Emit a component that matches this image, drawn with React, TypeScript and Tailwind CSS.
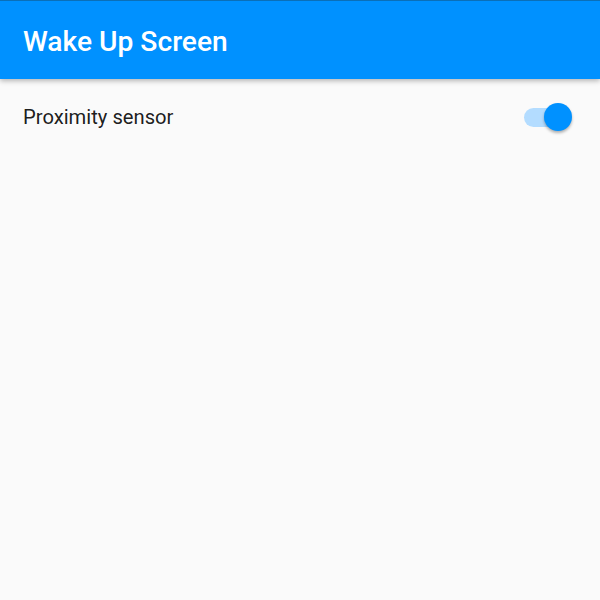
export default function App() {
    return (
        <div className="w-[600px] h-[600px] bg-[#fafafa] font-['Roboto',sans-serif] overflow-hidden">
            <header className="h-[79px] bg-[#0091ff] border-t border-[#0a6fb8] flex items-center px-[23px] pt-[4px] shadow-[0_2px_5px_rgba(0,0,0,0.28)] relative">
                <h1 className="text-[28.2px] font-medium text-white leading-none">Wake Up Screen</h1>
            </header>

            <div className="h-[76px] flex items-center justify-between px-[23px]">
                <span className="text-[20.2px] text-black/90">Proximity sensor</span>

                <div className="relative w-[48px] h-[28px] flex items-center mr-[5px]">
                    <div className="w-[46px] h-[19px] rounded-full bg-[#b3dcff]" />
                    <div className="absolute right-0 w-[28px] h-[28px] rounded-full bg-[#0091ff] shadow-[0_2px_3px_rgba(0,0,0,0.3)]" />
                </div>
            </div>
        </div>
    )
}
